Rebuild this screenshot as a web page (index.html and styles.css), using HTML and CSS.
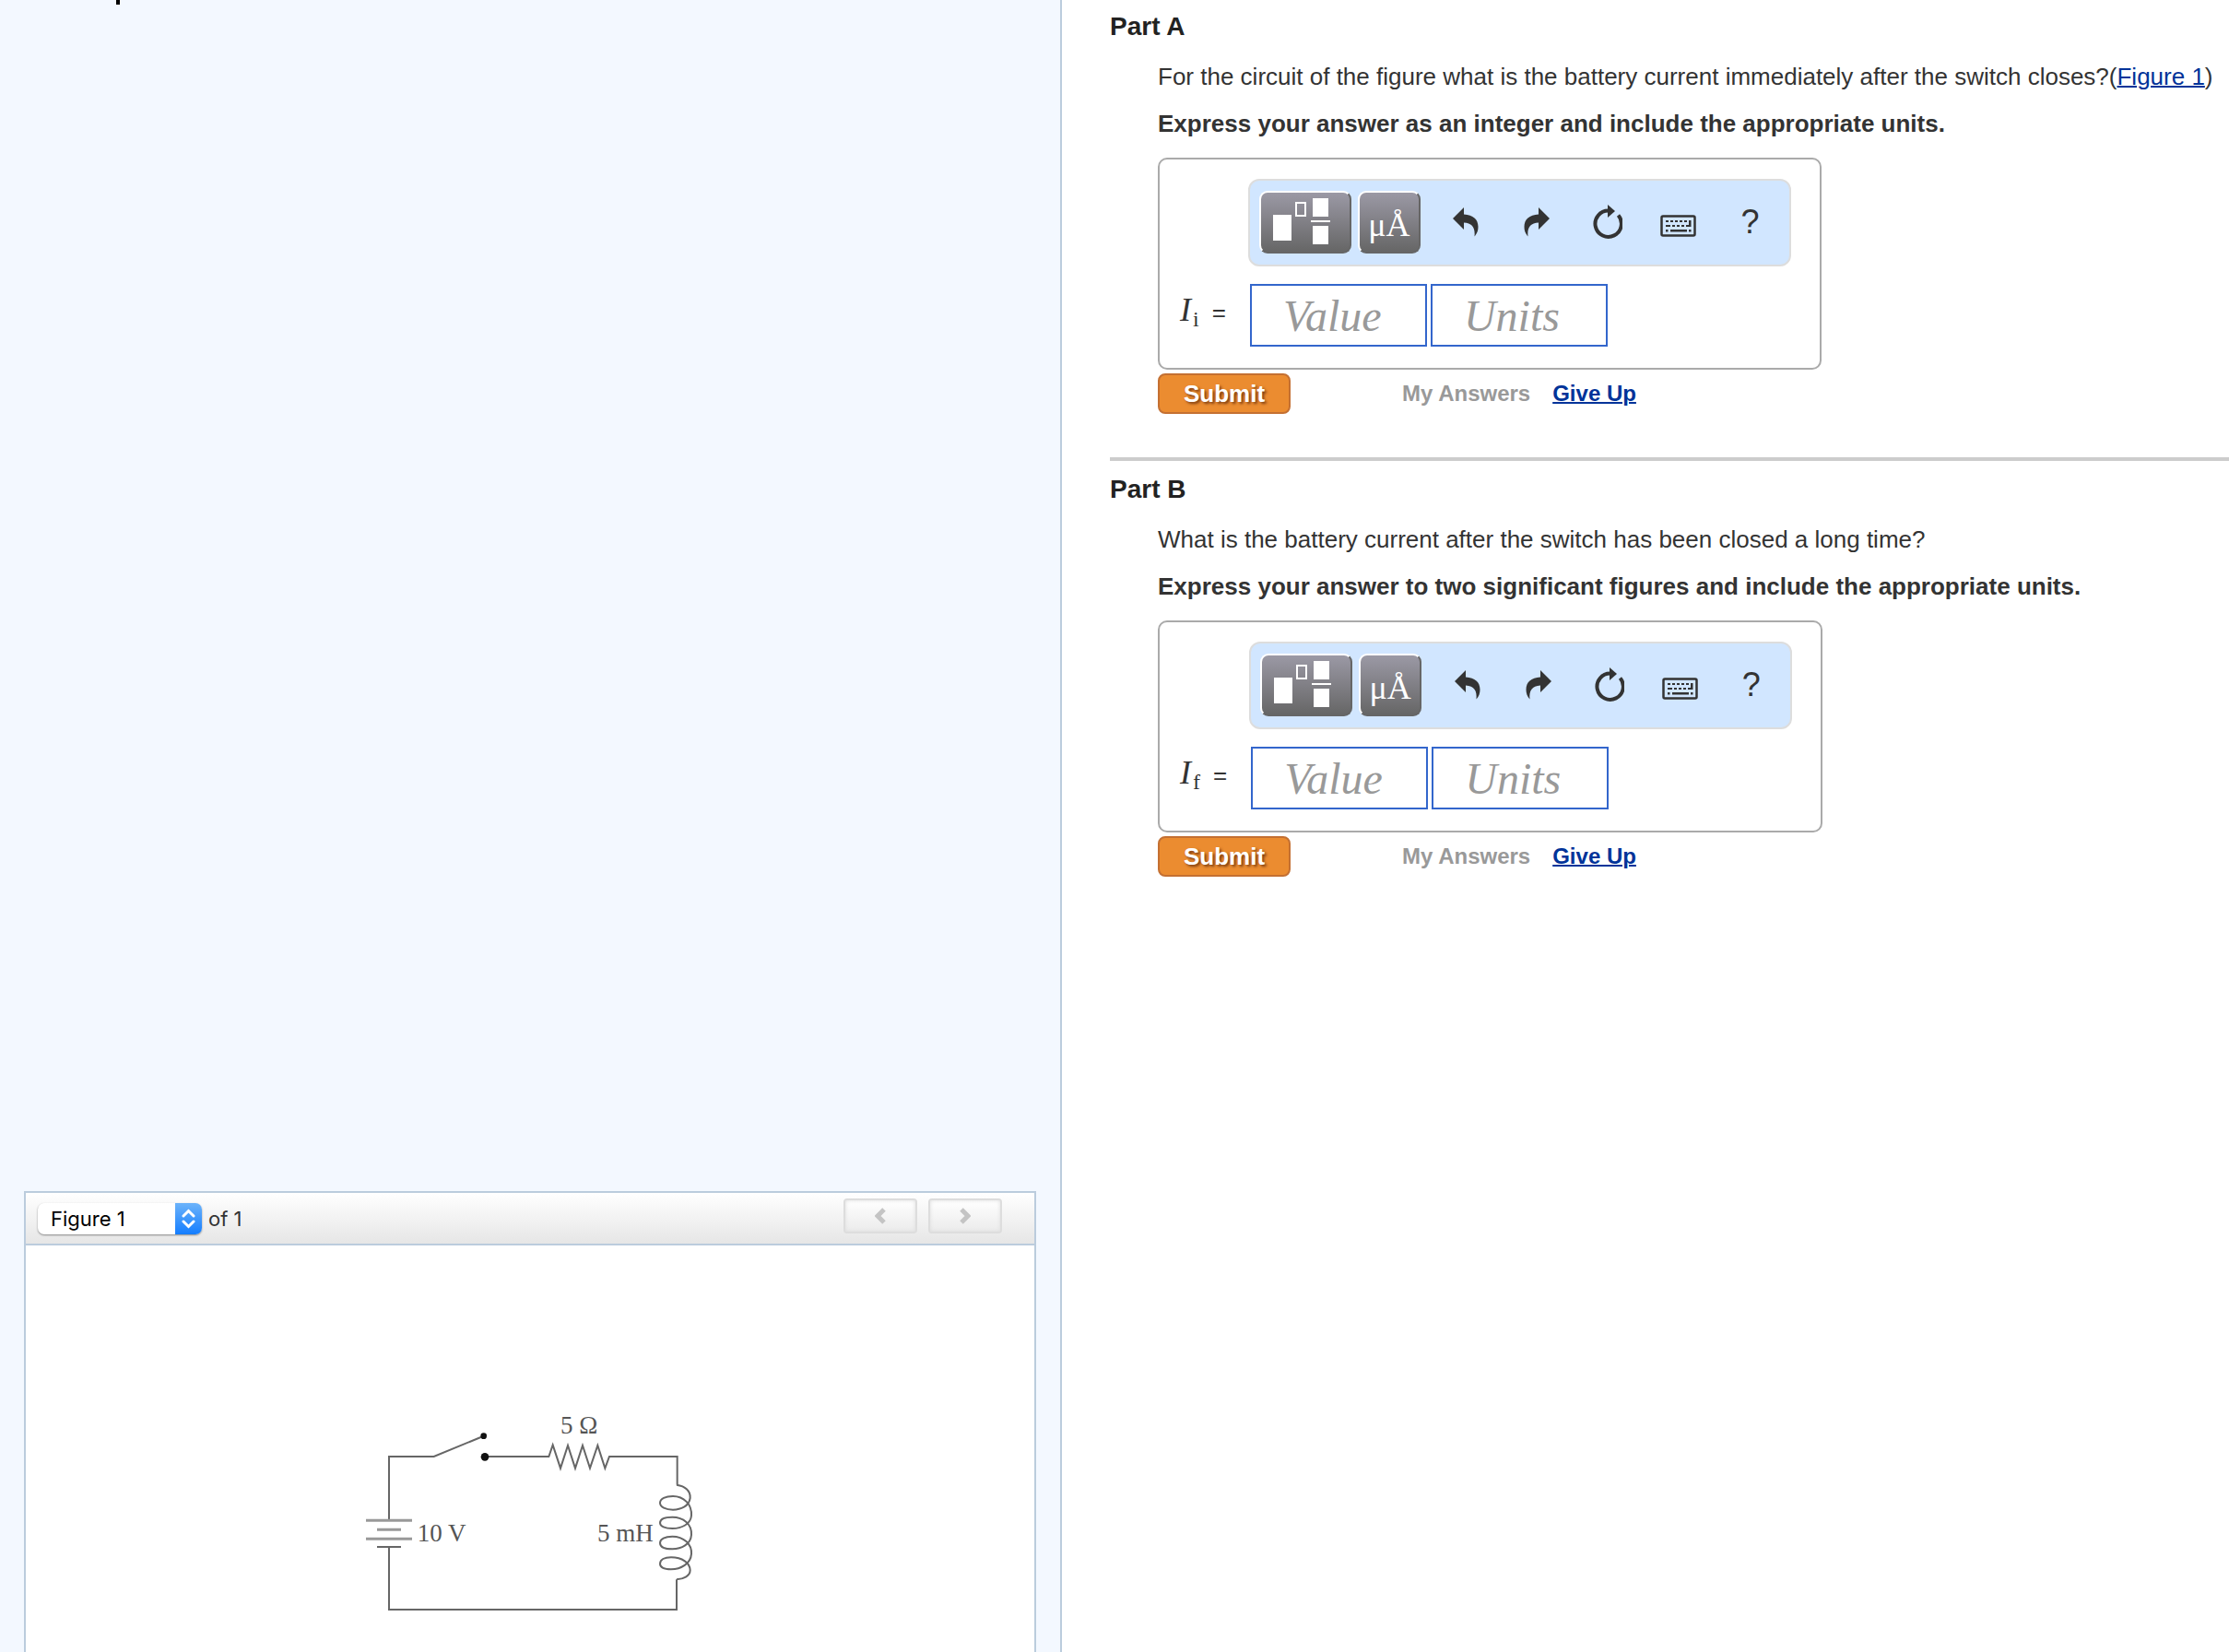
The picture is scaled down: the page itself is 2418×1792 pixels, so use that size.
FILE: index.html
```html
<!DOCTYPE html>
<html lang="en">
<head>
    <meta charset="UTF-8">
    <meta name="viewport" content="width=device-width, initial-scale=1.0">
    <title>Circuit problem</title>
    <link rel="stylesheet" href="styles.css">
</head>
<body>
    <!-- icons shared by both toolbars -->
    <svg class="sprite" aria-hidden="true">
        <symbol id="icon-template" viewBox="0 0 96 64">
            <rect x="13" y="24" width="20" height="28" fill="#fff"/>
            <rect x="38" y="11" width="10" height="14" fill="none" stroke="#fff" stroke-width="2"/>
            <rect x="56" y="6" width="17" height="20" fill="#fff"/>
            <rect x="54" y="30" width="21" height="2" fill="#fff"/>
            <rect x="56" y="36" width="17" height="20" fill="#fff"/>
        </symbol>
        <symbol id="icon-undo" viewBox="0 0 28 32">
            <path d="M0 12 12 0V7.500C22 8 27.500 13 27.500 21 27.500 25 26.500 28 23.500 31.500 24.500 22 21 17 12 16.500V24Z"/>
        </symbol>
        <symbol id="icon-redo" viewBox="0 0 28 32">
            <path d="M28 12 16 0V7.500C6 8 .5 13 .5 21 .5 25 1.500 28 4.500 31.500 3.500 22 7 17 16 16.500V24Z"/>
        </symbol>
        <symbol id="icon-reset" viewBox="0 0 32 37">
            <path d="M17 6.500A14.200 14.200 0 1 0 27.500 11.500" fill="none" stroke="#333" stroke-width="4"/>
            <path d="M16 0 24 7 16 14Z"/>
        </symbol>
        <symbol id="icon-keyboard" viewBox="0 0 40 24">
            <rect x="1.500" y="1.500" width="36" height="21" rx="1.500" fill="none" stroke="#333" stroke-width="2.500"/>
            <path d="M6 6h3v2H6zM11 6h3v2h-3zM16 6h3v2h-3zM21 6h3v2h-3zM26 6h3v2h-3zM6 11h5v2H6zM13 11h3v2h-3zM18 11h3v2h-3zM23 11h3v2h-3zM31 6h2.500v7H28v-2h3zM6 16h2.500v2.500H6zM11 16h18v2.500H11zM31 16h2.500v2.500H31z"/>
        </symbol>
    </svg>

    <div class="page">
        <div class="left">
            <div class="intro-end"></div>
            <div class="figure">
                <div class="figure-bar">
                    <div class="select">
                        <select id="figure" aria-label="Figure">
                            <option>Figure 1</option>
                        </select>
                        <span class="arrows">
                            <svg width="15" height="22" viewBox="0 0 15 22"><path d="M2 8 7.500 2.500 13 8M2 14 7.500 19.500 13 14"/></svg>
                        </span>
                    </div>
                    <label for="figure">of 1</label>
                    <div class="nav">
                        <button type="button" aria-label="Previous figure"><svg width="12" height="18" viewBox="0 0 12 18"><path d="M10 2 3 9 10 16"/></svg></button>
                        <button type="button" aria-label="Next figure"><svg width="12" height="18" viewBox="0 0 12 18"><path d="M2 2 9 9 2 16"/></svg></button>
                    </div>
                </div>
                <div class="figure-body">
                    <svg class="circuit" width="390" height="282" viewBox="0 0 1170 846">
                        <!-- wires and switch -->
                        <path d="M126 415V210H272L432 144M438 210H646L659 172 684 248 708 174 732 248 756 174 780 248 805 174 829 248 843 210H1064V302M1062 610V708H126V504"/>
                        <circle cx="434" cy="143" r="10"/>
                        <circle cx="438" cy="211" r="13"/>
                        <!-- battery -->
                        <path class="plate" d="M51 418H201M87 448H165M51 478H201"/>
                        <path d="M87 504H165"/>
                        <!-- coil -->
                        <path d="M1062 302C1090 306 1108 322 1106 345C1102 372 1076 383 1050 383C1026 383 1008 374 1008 361C1008 347 1026 339 1050 339C1085 339 1112 365 1110 402C1108 430 1078 444 1048 444C1024 444 1008 437 1008 426C1008 414 1024 407 1048 407C1084 407 1112 430 1110 465C1108 495 1078 511 1048 511C1024 511 1008 504 1008 491C1008 478 1024 470 1048 470C1084 470 1112 494 1110 527C1108 558 1076 577 1044 577C1022 577 1008 570 1008 559C1008 546 1022 538 1044 538C1080 538 1106 556 1106 580C1106 598 1086 608 1062 610"/>
                        <text x="684" y="136">5 Ω</text>
                        <text x="218" y="487">10 V</text>
                        <text x="804" y="485">5 mH</text>
                    </svg>
                </div>
            </div>
        </div>

        <div class="right">
            <div class="part">
                <h2>Part A</h2>
                <div class="content">
                    <p>For the circuit of the figure what is the battery current immediately after the switch closes?(<a href="#figure">Figure 1</a>)</p>
                    <p class="express">Express your answer as an integer and include the appropriate units.</p>
                    <div class="answer">
                        <label class="symbol" for="value-a"><i>I</i><sub>i</sub><span>=</span></label>
                        <div class="toolbar">
                            <div class="keys">
                                <button type="button" class="key wide" aria-label="Templates"><svg width="96" height="64"><use href="#icon-template"/></svg></button>
                                <button type="button" class="key">μÅ</button>
                            </div>
                            <button type="button" class="tool" aria-label="Undo"><svg width="28" height="32"><use href="#icon-undo"/></svg></button>
                            <button type="button" class="tool" aria-label="Redo"><svg width="28" height="32"><use href="#icon-redo"/></svg></button>
                            <button type="button" class="tool" aria-label="Reset"><svg width="32" height="37"><use href="#icon-reset"/></svg></button>
                            <button type="button" class="tool low" aria-label="Keyboard"><svg width="40" height="24"><use href="#icon-keyboard"/></svg></button>
                            <button type="button" class="tool">?</button>
                        </div>
                        <div class="fields">
                            <input type="text" id="value-a" placeholder="Value">
                            <input type="text" placeholder="Units" aria-label="Units">
                        </div>
                    </div>
                    <div class="actions">
                        <button type="submit" class="submit">Submit</button>
                        <span>My Answers</span>
                        <a href="#">Give Up</a>
                    </div>
                </div>
            </div>

            <div class="part">
                <h2>Part B</h2>
                <div class="content">
                    <p>What is the battery current after the switch has been closed a long time?</p>
                    <p class="express">Express your answer to two significant figures and include the appropriate units.</p>
                    <div class="answer">
                        <label class="symbol" for="value-b"><i>I</i><sub>f</sub><span>=</span></label>
                        <div class="toolbar">
                            <div class="keys">
                                <button type="button" class="key wide" aria-label="Templates"><svg width="96" height="64"><use href="#icon-template"/></svg></button>
                                <button type="button" class="key">μÅ</button>
                            </div>
                            <button type="button" class="tool" aria-label="Undo"><svg width="28" height="32"><use href="#icon-undo"/></svg></button>
                            <button type="button" class="tool" aria-label="Redo"><svg width="28" height="32"><use href="#icon-redo"/></svg></button>
                            <button type="button" class="tool" aria-label="Reset"><svg width="32" height="37"><use href="#icon-reset"/></svg></button>
                            <button type="button" class="tool low" aria-label="Keyboard"><svg width="40" height="24"><use href="#icon-keyboard"/></svg></button>
                            <button type="button" class="tool">?</button>
                        </div>
                        <div class="fields">
                            <input type="text" id="value-b" placeholder="Value">
                            <input type="text" placeholder="Units" aria-label="Units">
                        </div>
                    </div>
                    <div class="actions">
                        <button type="submit" class="submit">Submit</button>
                        <span>My Answers</span>
                        <a href="#">Give Up</a>
                    </div>
                </div>
            </div>
        </div>
    </div>
</body>
</html>
```

FILE: styles.css
```css
* {
    box-sizing: border-box;
}
body {
    margin: 0;
    font-family: "Liberation Sans", Arial, sans-serif;
    font-size: 26px;
    line-height: 30px;
    color: #333;
    background: #fff;
}
button {
    padding: 0;
    cursor: pointer;
}
a {
    color: #039;
    text-decoration-thickness: 2px;
}
.sprite {
    display: none;
}
.page {
    display: grid;
    grid-template-columns: 91fr 100fr;
    min-height: 100vh;
}

/* left pane */
.left {
    display: flex;
    flex-direction: column;
    justify-content: space-between;
    padding: 0 26px;
    background: #f3f8ff;
    border-right: 2px solid #bcd;
}
.intro-end {
    width: 4px;
    height: 5px;
    margin-left: 100px;
    background: #000;
}
.figure {
    border: 2px solid #bcd;
    border-bottom: 0;
    background: #fff;
}
.figure-bar {
    display: flex;
    align-items: center;
    gap: 7px;
    height: 57px;
    padding: 0 35px 0 13px;
    border-bottom: 2px solid #bcd;
    background: linear-gradient(#fff, #e6e6e6);
    font-family: Inter, sans-serif;
    font-size: 22px;
}
.select {
    display: flex;
    width: 178px;
    height: 34px;
    border-radius: 7px;
    overflow: hidden;
    background: #fff;
    box-shadow: 0 1px 2px #888;
}
.select select {
    flex: 1;
    padding: 0 14px;
    border: 0;
    appearance: none;
    background: none;
    font: inherit;
    color: #000;
}
.arrows {
    display: flex;
    align-items: center;
    justify-content: center;
    width: 29px;
    background: linear-gradient(#6cb3fa, #147dff);
}
.arrows path {
    fill: none;
    stroke: #fff;
    stroke-width: 3;
    stroke-linecap: round;
}
.nav {
    display: flex;
    gap: 12px;
    margin: 0 0 6px auto;
}
.nav button {
    width: 80px;
    height: 38px;
    border: 2px solid #ddd;
    border-radius: 4px;
    background: linear-gradient(#fff, #ebebeb);
    box-shadow: inset 0 0 4px #ddd;
}
.nav svg {
    display: block;
    margin: 0 auto;
}
.nav path {
    fill: none;
    stroke: #c4c4c4;
    stroke-width: 5;
}
.figure-body {
    height: 441px;
    padding-top: 159px;
    text-align: center;
}
.circuit path {
    fill: none;
    stroke: #666;
    stroke-width: 6;
}
.circuit .plate {
    stroke: #999;
    stroke-width: 9;
}
.circuit circle {
    fill: #111;
}
.circuit text {
    font-family: "Liberation Serif", serif;
    font-size: 81px;
    fill: #555;
}

/* right pane */
.right {
    padding-left: 52px;
}
.part {
    height: 502px;
    padding-top: 12px;
}
.part + .part {
    margin-top: -6px;
    border-top: 4px solid #ccc;
    padding-top: 14px;
}
.part h2 {
    margin: 0;
    font-size: 28px;
    line-height: 34px;
    color: #222;
}
.content {
    padding-left: 52px;
}
.content p {
    margin: 22px 0 0;
}
.content .express {
    margin-top: 21px;
    font-weight: bold;
}
.answer {
    display: inline-grid;
    grid-template-columns: auto auto;
    margin-top: 22px;
    padding: 21px 31px 23px 22px;
    border: 2px solid #aaa;
    border-radius: 10px;
    vertical-align: top;
}
.symbol {
    grid-row: 2;
    margin: 32px 24px 0 0;
    white-space: nowrap;
}
.symbol i,
.symbol sub {
    font-family: "Liberation Serif", serif;
}
.symbol i {
    font-size: 36px;
}
.symbol sub {
    font-size: 24px;
    line-height: 0;
    vertical-align: -6px;
    margin: 0 14px 0 2px;
}
.toolbar {
    grid-column: 2;
    display: flex;
    align-items: center;
    height: 95px;
    padding: 0 4px 2px 10px;
    border: 2px solid #ddd;
    border-radius: 12px;
    background: #d1e6ff;
}
.keys {
    display: flex;
    gap: 7px;
    margin-right: 11px;
}
.key {
    width: 68px;
    height: 68px;
    padding-top: 6px;
    border: 2px solid;
    border-color: #fff #666 #666 #fff;
    border-radius: 9px;
    background: linear-gradient(#9b99a5, #666);
    font-family: "Liberation Serif", serif;
    font-size: 36px;
    color: #fff;
}
.key.wide {
    width: 100px;
    padding: 0;
}
.key svg {
    display: block;
}
.tool {
    display: flex;
    align-items: center;
    justify-content: center;
    width: 77px;
    height: 68px;
    padding: 0;
    border: 0;
    background: none;
    font-family: "Liberation Sans", Arial, sans-serif;
    font-size: 36px;
    color: #333;
    fill: #333;
}
.tool.low {
    padding-top: 8px;
}
.fields {
    grid-column: 2;
    display: flex;
    gap: 4px;
    margin: 19px 0 0 2px;
}
.fields input {
    width: 192px;
    height: 68px;
    padding: 0 34px;
    border: 2px solid #36c;
    border-radius: 0;
    font-family: "Liberation Serif", serif;
    font-size: 48px;
    font-style: italic;
}
.fields input::placeholder {
    color: #999;
}
.actions {
    display: flex;
    align-items: center;
    margin-top: 4px;
    font-size: 24px;
    font-weight: bold;
}
.actions span {
    margin: 0 24px 0 121px;
    color: #999;
}
.submit {
    width: 144px;
    height: 44px;
    border: 2px solid #c47032;
    border-radius: 8px;
    background: #eb8c30;
    font-family: inherit;
    font-size: 26px;
    font-weight: bold;
    color: #fff;
    text-shadow: 2px 2px 3px #7a3a10;
}
```
